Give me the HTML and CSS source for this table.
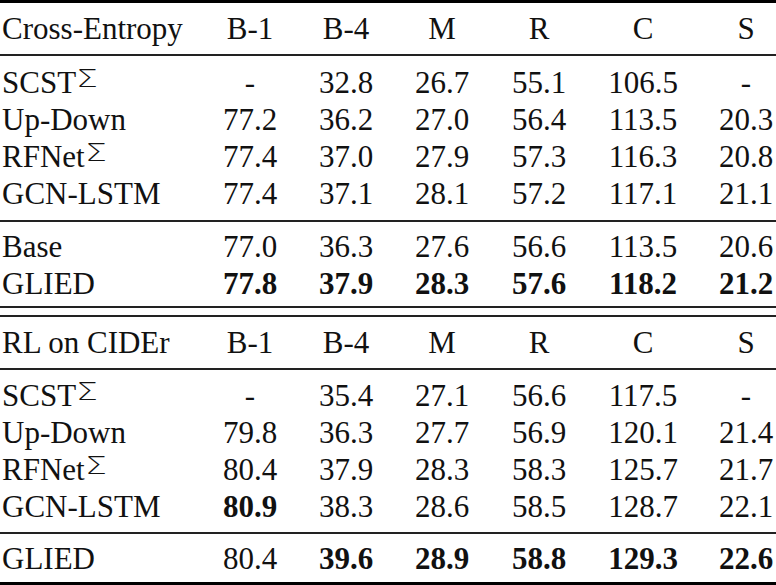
FILE: index.html
```html
<!DOCTYPE html>
<html lang="en">
<head>
  <meta charset="UTF-8"/>
  <title>Captioning results</title>
  <link rel="stylesheet" href="styles.css">
</head>
<body>

  <!-- Cross-Entropy training -->
  <table class="results top">
    <colgroup>
      <col class="c-name"><col class="c-b1"><col class="c-b4"><col class="c-m">
      <col class="c-r"><col class="c-c"><col class="c-s">
    </colgroup>
    <thead>
      <tr><th class="name">Cross-Entropy</th><th>B-1</th><th>B-4</th><th>M</th><th>R</th><th>C</th><th>S</th></tr>
    </thead>
    <tbody class="many">
      <tr><td class="name">SCST<sup>&Sigma;</sup></td><td>-</td><td>32.8</td><td>26.7</td><td>55.1</td><td>106.5</td><td>-</td></tr>
      <tr><td class="name">Up-Down</td><td>77.2</td><td>36.2</td><td>27.0</td><td>56.4</td><td>113.5</td><td>20.3</td></tr>
      <tr><td class="name">RFNet<sup>&Sigma;</sup></td><td>77.4</td><td>37.0</td><td>27.9</td><td>57.3</td><td>116.3</td><td>20.8</td></tr>
      <tr><td class="name">GCN-LSTM</td><td>77.4</td><td>37.1</td><td>28.1</td><td>57.2</td><td>117.1</td><td>21.1</td></tr>
    </tbody>
    <tbody class="ours">
      <tr><td class="name">Base</td><td>77.0</td><td>36.3</td><td>27.6</td><td>56.6</td><td>113.5</td><td>20.6</td></tr>
      <tr><td class="name">GLIED</td><td><b>77.8</b></td><td><b>37.9</b></td><td><b>28.3</b></td><td><b>57.6</b></td><td><b>118.2</b></td><td><b>21.2</b></td></tr>
    </tbody>
  </table>

  <!-- RL fine-tuning on CIDEr -->
  <table class="results bottom">
    <colgroup>
      <col class="c-name"><col class="c-b1"><col class="c-b4"><col class="c-m">
      <col class="c-r"><col class="c-c"><col class="c-s">
    </colgroup>
    <thead>
      <tr><th class="name">RL on CIDEr</th><th>B-1</th><th>B-4</th><th>M</th><th>R</th><th>C</th><th>S</th></tr>
    </thead>
    <tbody class="many">
      <tr><td class="name">SCST<sup>&Sigma;</sup></td><td>-</td><td>35.4</td><td>27.1</td><td>56.6</td><td>117.5</td><td>-</td></tr>
      <tr><td class="name">Up-Down</td><td>79.8</td><td>36.3</td><td>27.7</td><td>56.9</td><td>120.1</td><td>21.4</td></tr>
      <tr><td class="name">RFNet<sup>&Sigma;</sup></td><td>80.4</td><td>37.9</td><td>28.3</td><td>58.3</td><td>125.7</td><td>21.7</td></tr>
      <tr><td class="name">GCN-LSTM</td><td><b>80.9</b></td><td>38.3</td><td>28.6</td><td>58.5</td><td>128.7</td><td>22.1</td></tr>
    </tbody>
    <tbody class="ours">
      <tr><td class="name">GLIED</td><td>80.4</td><td><b>39.6</b></td><td><b>28.9</b></td><td><b>58.8</b></td><td><b>129.3</b></td><td><b>22.6</b></td></tr>
    </tbody>
  </table>

</body>
</html>
```

FILE: styles.css
```css
* { box-sizing: border-box; }
body {
  margin: 0;
  font-family: "Liberation Serif", "Times New Roman", serif;
  font-size: 31px;
  color: #111;
  background: #fff;
}

/* Tables */
.results {
  width: 776px;
  border-collapse: collapse;
  table-layout: fixed;
}
.results.top { border-top: 3px solid #000; border-bottom: 2px solid #222; }
.results.bottom { margin-top: 7px; border-top: 2px solid #222; border-bottom: 3px solid #000; }

.c-name { width: 184px; }
.c-b1 { width: 132px; }
.c-b4 { width: 60px; }
.c-m { width: 132px; }
.c-r { width: 62px; }
.c-c { width: 146px; }
.c-s { width: 60px; }

.results th,
.results td {
  padding: 0;
  line-height: 37px;
  text-align: center;
  font-weight: normal;
  white-space: nowrap;
}
.results .name { text-align: left; padding-left: 2px; }
.results b { font-weight: bold; }

/* Rules between blocks */
.results thead tr { border-bottom: 2px solid #222; }
.results tbody.many { border-bottom: 2px solid #222; }
.results thead th { padding-top: 7px; padding-bottom: 7px; }
.results tbody.many tr:first-child td { padding-top: 8px; }
.results tbody.many tr:last-child td { padding-bottom: 8px; }
.bottom tbody.many tr:first-child td { padding-top: 7px; }
.bottom tbody.many tr:last-child td { padding-bottom: 7px; }
.results tbody.ours tr:first-child td { padding-top: 6px; }
.results tbody.ours tr:last-child td { padding-bottom: 4px; }
.bottom tbody.ours tr:last-child td { padding-bottom: 5px; }

/* thin sigma superscript */
sup {
  display: inline-block;
  font-family: "DejaVu Sans", sans-serif;
  font-weight: 200;
  font-size: 24px;
  line-height: 0;
  vertical-align: 6px;
  margin-left: 0;
  margin-right: 8px;
  transform: scaleX(1.45);
  transform-origin: left center;
}
```
